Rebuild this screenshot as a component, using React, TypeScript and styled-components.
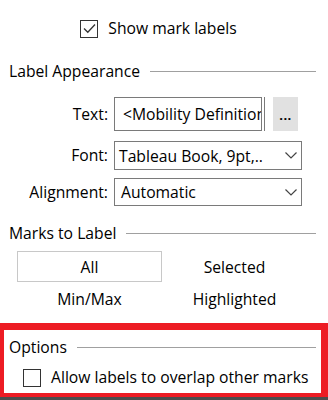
import React from 'react';
import styled, { createGlobalStyle } from 'styled-components';

const GlobalStyle = createGlobalStyle`
  html, body {
    margin: 0;
    padding: 0;
    background: #fff;
  }
  body {
    font-family: "Open Sans", "Noto Sans", sans-serif;
    font-size: 15.7px;
    color: #000;
  }
`;

const Page = styled.div`
  width: 328px;
  height: 400px;
  overflow: hidden;
  display: flex;
  flex-direction: column;
  background: #fff;
  padding-top: 19px;
  box-sizing: border-box;
`;

const Content = styled.div`
  padding: 0 12px 0 9px;
  display: flex;
  flex-direction: column;
`;

const CheckRow = styled.label<{ $center?: boolean; $indent?: number; $top?: number }>`
  display: flex;
  align-items: center;
  gap: 10px;
  height: 19px;
  justify-content: ${(p) => (p.$center ? 'center' : 'flex-start')};
  padding-left: ${(p) => p.$indent ?? 0}px;
  padding-right: ${(p) => (p.$center ? 8 : 0)}px;
  margin-top: ${(p) => p.$top ?? 0}px;
  line-height: 19px;
  white-space: nowrap;
`;

const Box = styled.span`
  width: 18px;
  height: 18px;
  border: 1px solid #333;
  box-sizing: border-box;
  display: flex;
  align-items: center;
  justify-content: center;
  background: #fff;
  flex-shrink: 0;
`;

const Header = styled.div<{ $top: number }>`
  display: flex;
  align-items: center;
  gap: 10px;
  height: 20px;
  margin-top: ${(p) => p.$top}px;
  white-space: nowrap;
  &::after {
    content: '';
    flex: 1;
    height: 1px;
    background: #a0a0a0;
  }
`;

const FormGrid = styled.div`
  display: grid;
  grid-template-columns: 99px auto;
  column-gap: 6px;
  align-items: center;
  margin-top: 16px;
`;

const FieldLabel = styled.div<{ $h: number; $mb: number }>`
  text-align: right;
  height: ${(p) => p.$h}px;
  line-height: ${(p) => p.$h}px;
  margin-bottom: ${(p) => p.$mb}px;
`;

const FieldRow = styled.div<{ $h: number; $mb: number }>`
  display: flex;
  align-items: stretch;
  gap: 11px;
  height: ${(p) => p.$h}px;
  margin-bottom: ${(p) => p.$mb}px;
`;

const TextBox = styled.div`
  width: 148px;
  box-sizing: border-box;
  border: 1px solid #7a7a7a;
  padding-left: 8px;
  display: flex;
  align-items: center;
  overflow: hidden;
  white-space: nowrap;
  box-shadow: 2px 0 0 #fff, 3px 0 0 #7a7a7a;
`;

const DotsButton = styled.div`
  width: 25px;
  background: #e1e1e1;
  display: flex;
  align-items: center;
  justify-content: center;
  font-weight: 700;
  font-size: 13px;
  letter-spacing: 0.5px;
  padding-top: 2px;
  box-sizing: border-box;
`;

const Select = styled.div<{ $pad: number }>`
  width: 188px;
  box-sizing: border-box;
  border: 1px solid #7a7a7a;
  padding-left: ${(p) => p.$pad}px;
  padding-right: 4px;
  display: flex;
  align-items: center;
  justify-content: space-between;
  white-space: nowrap;
  overflow: hidden;
  background: #fff;
`;

const MarksGrid = styled.div`
  display: grid;
  grid-template-columns: 145px 145px;
  grid-auto-rows: 32px;
  margin: 8px 0 0 8px;
`;

const MarkOption = styled.div<{ $active?: boolean }>`
  display: flex;
  align-items: center;
  justify-content: center;
  box-sizing: border-box;
  border: 1px solid ${(p) => (p.$active ? '#c8c8c8' : 'transparent')};
  height: ${(p) => (p.$active ? '31px' : '32px')};
`;

const Highlight = styled.div`
  margin-top: 8px;
  border-style: solid;
  border-color: #ed1c24;
  border-width: 7px 7px 4px 4px;
  padding: 7px 5px 6px 5px;
  display: flex;
  flex-direction: column;
`;

const BottomStrip = styled.div`
  height: 3px;
  background: #4d4d4d;
`;

const Chevron = () => (
  <svg width="12" height="7" viewBox="0 0 12 7">
    <path d="M0.5 0.5 L6 6 L11.5 0.5" fill="none" stroke="#444" strokeWidth="1.2" />
  </svg>
);

const Check = () => (
  <svg width="13" height="11" viewBox="0 0 13 11">
    <path d="M1 5.5 L4.8 9.3 L12 1.5" fill="none" stroke="#333" strokeWidth="1.3" />
  </svg>
);

export default function App() {
  return (
    <>
      <GlobalStyle />
      <Page>
        <Content>
          <CheckRow $center>
            <Box>
              <Check />
            </Box>
            Show mark labels
          </CheckRow>

          <Header $top={23}>Label Appearance</Header>

          <FormGrid>
            <FieldLabel $h={34} $mb={10}>Text:</FieldLabel>
            <FieldRow $h={34} $mb={10}>
              <TextBox>&lt;Mobility Definition&gt;</TextBox>
              <DotsButton>...</DotsButton>
            </FieldRow>
            <FieldLabel $h={29} $mb={8}>Font:</FieldLabel>
            <FieldRow $h={29} $mb={8}>
              <Select $pad={4}>
                Tableau Book, 9pt,..
                <Chevron />
              </Select>
            </FieldRow>
            <FieldLabel $h={28} $mb={0}>Alignment:</FieldLabel>
            <FieldRow $h={28} $mb={0}>
              <Select $pad={6}>
                Automatic
                <Chevron />
              </Select>
            </FieldRow>
          </FormGrid>

          <Header $top={17}>Marks to Label</Header>

          <MarksGrid>
            <MarkOption $active>All</MarkOption>
            <MarkOption>Selected</MarkOption>
            <MarkOption>Min/Max</MarkOption>
            <MarkOption>Highlighted</MarkOption>
          </MarksGrid>
        </Content>

        <Highlight>
          <Header $top={0}>Options</Header>
          <CheckRow $indent={14} $top={11}>
            <Box />
            Allow labels to overlap other marks
          </CheckRow>
        </Highlight>
        <BottomStrip />
      </Page>
    </>
  );
}
